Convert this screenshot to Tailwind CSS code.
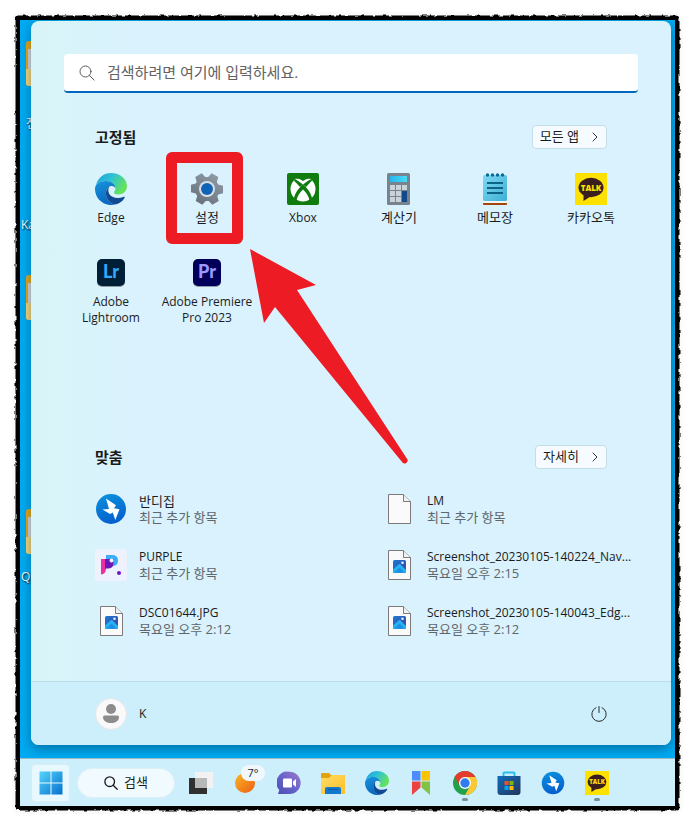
<!DOCTYPE html>
<html lang="ko">
<head>
<meta charset="utf-8">
<meta name="viewport" content="width=device-width, initial-scale=1">
<title>시작</title>
<script src="https://cdn.jsdelivr.net/npm/@tailwindcss/browser@4"></script>
</head>
<body class="bg-white font-['Open_Sans','Noto_Sans_CJK_KR',sans-serif] text-[#1b1b1b]">
<!-- Shared icon definitions -->
<svg class="absolute size-0" aria-hidden="true">
  <defs>
    <filter id="rough" x="-2%" y="-2%" width="104%" height="104%">
      <feTurbulence type="fractalNoise" baseFrequency="0.18" numOctaves="2" seed="4" result="n"/>
      <feDisplacementMap in="SourceGraphic" in2="n" scale="4" xChannelSelector="R" yChannelSelector="G"/>
    </filter>
    <linearGradient id="edgeTop" x1="0" y1="0" x2="1" y2="0.5"><stop offset="0" stop-color="#1b9de0"/><stop offset="0.5" stop-color="#2fc3d2"/><stop offset="1" stop-color="#66e35a"/></linearGradient>
    <linearGradient id="edgeLeft" x1="0" y1="0" x2="0.4" y2="1"><stop offset="0" stop-color="#1794dc"/><stop offset="1" stop-color="#0968c0"/></linearGradient>
    <linearGradient id="gear" x1="0" y1="0" x2="0" y2="1"><stop offset="0" stop-color="#8d98a3"/><stop offset="1" stop-color="#69747f"/></linearGradient>
    <linearGradient id="bandi" x1="0" y1="0" x2="0.3" y2="1"><stop offset="0" stop-color="#0a94dd"/><stop offset="1" stop-color="#0561cf"/></linearGradient>
    <linearGradient id="calc" x1="0" y1="0" x2="1" y2="0"><stop offset="0" stop-color="#27b5ee"/><stop offset="1" stop-color="#46dcf8"/></linearGradient>
    <linearGradient id="note" x1="0" y1="0" x2="1" y2="1"><stop offset="0" stop-color="#7fd9f3"/><stop offset="1" stop-color="#3fafd4"/></linearGradient>
    <linearGradient id="win" x1="0" y1="0" x2="1" y2="1"><stop offset="0" stop-color="#55d5fb"/><stop offset="1" stop-color="#0670cd"/></linearGradient>
    <linearGradient id="pic" x1="0" y1="0" x2="1" y2="1"><stop offset="0" stop-color="#1e7bd3"/><stop offset="0.6" stop-color="#2e55b4"/><stop offset="1" stop-color="#5b3fae"/></linearGradient>
    <linearGradient id="sun" x1="0" y1="0" x2="1" y2="1"><stop offset="0" stop-color="#f9b627"/><stop offset="1" stop-color="#ee5f12"/></linearGradient>
    <linearGradient id="chat" x1="1" y1="0" x2="0" y2="1"><stop offset="0" stop-color="#a07bc4"/><stop offset="0.5" stop-color="#6763cb"/><stop offset="1" stop-color="#4c4cae"/></linearGradient>
    <linearGradient id="fold" x1="0" y1="0" x2="1" y2="1"><stop offset="0" stop-color="#ffdc67"/><stop offset="1" stop-color="#fdbf25"/></linearGradient>
    <linearGradient id="store" x1="0" y1="0" x2="1" y2="1"><stop offset="0" stop-color="#0f6cbd"/><stop offset="1" stop-color="#273459"/></linearGradient>
    <symbol id="i-edge" viewBox="0 0 32 32">
      <path d="M1 12C3 4.500 9 0 16 0c9 0 16 6 16 13 0 5-4 8.500-8.500 8.500-3 0-4.500-1-4.500-2 0-1.200 1.500-1.800 1.500-4C20.500 11 16 8 11 8 6 8 3 9.500 1 12z" fill="url(#edgeTop)"/>
      <path d="M0 16C0 11.500 4 8 11 8c5.500 0 9.500 3.300 9.500 7.500-.8-2-2.500-2.700-4.500-2.500-3 .4-5.500 4-5 8 .6 5.500 5 10 9 11C9 33.500 0 26 0 16z" fill="url(#edgeLeft)"/>
      <path d="M14.500 13.300c-2.500 1.700-4 4.700-3.500 8.200.8 5 4.500 9.500 9 10 4-.8 7.500-3 9.500-6.500.5-1-.3-1.500-1.200-1-6 2.500-12.300.5-14.300-3.500-1.200-2.500-.7-5.500 .5-7.200z" fill="#114a92"/>
    </symbol>
    <symbol id="i-bandi" viewBox="0 0 32 32">
      <circle cx="16" cy="16" r="15" fill="url(#bandi)"/>
      <path d="M11 5.500 21 12.300 19 15.300 24.500 16.300 20.300 27 17.800 19.500 15 21 7.500 16.500 14 16z" fill="#fff"/>
    </symbol>
    <symbol id="i-talk" viewBox="0 0 32 32">
      <path d="M0 0h32v32H0z" fill="#fde100"/>
      <ellipse cx="16" cy="14.500" rx="12.500" ry="9.700" fill="#3b1e1e"/>
      <path d="M8.500 20.500 8.500 28l7-4.500z" fill="#3b1e1e"/>
      <text x="16" y="17.500" text-anchor="middle" font-family="Open Sans, sans-serif" font-weight="800" font-size="8" fill="#fde100">TALK</text>
    </symbol>
    <symbol id="i-file" viewBox="0 0 32 32">
      <path d="M5.500 1.500h15l7 7v22h-22z" fill="#fafafa" stroke="#7a7a7a"/>
      <path d="M20.500 1.500v7h7" fill="#f1f1f1" stroke="#7a7a7a"/>
    </symbol>
    <symbol id="i-image" viewBox="0 0 32 32">
      <use href="#i-file"/>
      <rect x="10" y="11" width="13" height="13" rx="1.500" fill="url(#pic)"/>
      <path d="M10 20.500 15.500 15.500q1-.8 2 0l5.500 5.500v1.500q0 1.500-1.500 1.500h-10q-1.500 0-1.500-1.500z" fill="#27b3f2"/>
      <path d="M11 23.800 16.500 18.500 22 23.800z" fill="#1e8fe6"/>
      <circle cx="19.500" cy="13.800" r="1.300" fill="#e5efff"/>
    </symbol>
    <symbol id="i-search" viewBox="0 0 16 16"><g fill="none" stroke="currentColor" stroke-linecap="round"><circle cx="6.500" cy="6.500" r="5.500"/><path d="m10.500 10.500 4.600 4.600"/></g></symbol>
    <symbol id="i-chev" viewBox="0 0 8 10"><path d="m2 1 4 4-4 4" fill="none" stroke="#333" stroke-linecap="round"/></symbol>
    <symbol id="i-folder" viewBox="0 0 40 46"><rect width="40" height="45" rx="3" fill="#eaa915"/><path d="M2 8h36v24H2z" fill="#d9dadb"/><path d="M0 28h40v14q0 3-3 3H3q-3 0-3-3z" fill="#f7d878"/></symbol>
  </defs>
</svg>

<div class="relative flex min-h-screen flex-col p-5">
  <!-- Torn black frame around the desktop -->
  <div class="absolute inset-3 rounded-lg bg-neutral-50"></div>
  <div class="absolute inset-4">
    <svg class="size-full overflow-visible" aria-hidden="true"><rect width="100%" height="100%" rx="3" stroke="#000" stroke-width="1" filter="url(#rough)"/></svg>
  </div>

  <div class="relative flex grow flex-col overflow-hidden bg-[#00abf2]">
    <!-- Desktop shortcuts partly covered by the menu -->
    <div class="absolute inset-y-0 left-0 w-16 text-xs text-white text-shadow-[1px_1px_2px_#000]">
      <svg class="absolute top-[21px] left-[6px] h-[46px] w-10" aria-hidden="true"><use href="#i-folder"/></svg>
      <span class="absolute top-24 left-[6px]">전</span>
      <span class="absolute top-[197px] left-px">Ka</span>
      <svg class="absolute top-[255px] left-[6px] h-[46px] w-10" aria-hidden="true"><use href="#i-folder"/></svg>
      <svg class="absolute top-[489px] left-[6px] h-[46px] w-10" aria-hidden="true"><use href="#i-folder"/></svg>
      <span class="absolute top-[549px] left-px">Qu</span>
    </div>

    <main class="relative mt-px mr-1 mb-[13px] ml-[11px] flex grow flex-col rounded-lg bg-[#d9f2fd] bg-linear-to-r from-[#d9f4f8] to-[#d9f2fd] to-15% shadow-[0_4px_12px_rgba(0,40,70,0.45)]">
      <div class="flex grow flex-col px-8 pt-[33px]">
        <label class="mx-px flex h-[39px] items-center gap-3 overflow-hidden rounded border-b-2 border-[#0067c0] bg-white px-[15px] text-[#5c5c5c]">
          <svg class="size-4 shrink-0" aria-hidden="true"><use href="#i-search"/></svg>
          <input type="text" aria-label="검색" placeholder="검색하려면 여기에 입력하세요." class="min-w-0 grow bg-transparent text-[15px] outline-none placeholder:text-[#626262]">
        </label>

        <section>
          <div class="mt-8 flex h-6 items-center justify-between px-8">
            <h2 class="text-[15px] leading-5 font-bold">고정됨</h2>
            <button class="flex h-6 items-center gap-3 rounded border border-[#c5dde8] bg-[#f5fbff] px-[7px] text-[13px]">모든 앱<svg class="h-[10px] w-2" aria-hidden="true"><use href="#i-chev"/></svg></button>
          </div>
          <div class="mt-6 grid grid-cols-6 text-center text-xs leading-4">
            <a href="#" class="flex h-21 flex-col items-center gap-[5px]"><svg class="size-8 shrink-0" aria-hidden="true"><use href="#i-edge"/></svg>Edge</a>
            <a href="#" class="relative flex h-21 flex-col items-center gap-1 text-[13px]">
              <svg class="size-8 shrink-0" viewBox="0 0 32 32" aria-hidden="true">
                <path transform="rotate(30 16 16)" d="M12.200 0h7.600l1.200 5 2.500 1.500 5-1.500 3.600 6.500-3.600 3.500v2l3.600 3.500-3.600 6.500-5-1.500L21 27l-1.200 5h-7.600L11 27l-2.500-1.500-5 1.500L-.1 20.500 3.500 17v-2L-.1 11.500 3.500 5l5 1.500L11 5z" fill="url(#gear)"/>
                <circle cx="16" cy="16" r="8" fill="#d9e0e6"/><circle cx="16" cy="16" r="6" fill="#1163b5"/>
              </svg>설정
              <span class="absolute -top-[21px] left-[7px] h-23 w-[77px] rounded-md border-[11px] border-[#ed1c24]"></span>
            </a>
            <a href="#" class="flex h-21 flex-col items-center gap-[5px]">
              <svg class="size-8 shrink-0" viewBox="0 0 32 32" aria-hidden="true"><rect width="32" height="32" rx="2" fill="#107c10"/><circle cx="16" cy="16" r="12.500" fill="#fff"/><path d="M8.300 6.200C11 4.800 14 6.500 16 8c2-1.500 5-3.200 7.700-1.800l-1-1.500C20 3 18 2.800 16 2.800s-4 .2-6.700 1.900zM16 11.500c4 3 8.500 9 9 14l-2.500 1.700C21.500 23 19 19 16 16.500 13 19 10.500 23 9.500 27.200L7 25.500c.5-5 5-11 9-14z" fill="#107c10"/><path d="M8.300 6.200Q12 8 16 11.500l-3 2.500Q9 9.500 6.800 7.500zM23.700 6.200Q20 8 16 11.500l3 2.500q4-4.500 6.200-6.500z" fill="#107c10"/></svg>Xbox</a>
            <a href="#" class="flex h-21 flex-col items-center gap-1 text-[13px]">
              <svg class="size-8 shrink-0" viewBox="0 0 32 32" aria-hidden="true"><rect x="4" width="23" height="32" rx="1.500" fill="#78838e"/><path d="M7 3h17v6H7z" fill="url(#calc)"/><path d="M7 12h5v5H7zm6 0h5v5h-5zm6 0h5v5h-5zM7 18h5v5H7zm6 0h5v5h-5zM7 24h5v5H7zm6 0h5v5h-5z" fill="#cbd3da"/><path d="M19 18h5v11h-5z" fill="#124a8c"/></svg>계산기</a>
            <a href="#" class="flex h-21 flex-col items-center gap-1 text-[13px]">
              <svg class="size-8 shrink-0" viewBox="0 0 32 32" aria-hidden="true"><path d="M4 28h24v3q0 1-1 1H5q-1 0-1-1z" fill="#a54509"/><path d="M4 26h24v4H4z" fill="#f2f5f6"/><rect x="4" y="2" width="24" height="26" rx="1.500" fill="url(#note)"/><path d="M8 10h16M8 15h16M8 20h16" stroke="#0c6489" stroke-width="2"/><g fill="#0b6a90"><circle cx="8.500" cy="2" r="1.700"/><circle cx="13.500" cy="2" r="1.700"/><circle cx="18.500" cy="2" r="1.700"/><circle cx="23.500" cy="2" r="1.700"/></g></svg>메모장</a>
            <a href="#" class="flex h-21 flex-col items-center gap-1 text-[13px]"><svg class="size-8 shrink-0" aria-hidden="true"><use href="#i-talk"/></svg>카카오톡</a>
            <a href="#" class="flex h-21 flex-col items-center gap-[5px]">
              <svg class="size-8 shrink-0" viewBox="0 0 32 32" aria-hidden="true"><rect x="2" y="3" width="28" height="27" rx="5" fill="#000" opacity="0.35"/><rect x="2" y="2" width="28" height="27" rx="5" fill="#001e36"/><text x="16" y="20.500" text-anchor="middle" font-family="Lato, sans-serif" font-weight="900" font-size="18" fill="#31a8ff">Lr</text></svg>Adobe<br>Lightroom</a>
            <a href="#" class="flex h-21 flex-col items-center gap-[5px]">
              <svg class="size-8 shrink-0" viewBox="0 0 32 32" aria-hidden="true"><rect x="2" y="3" width="28" height="27" rx="5" fill="#000" opacity="0.35"/><rect x="2" y="2" width="28" height="27" rx="5" fill="#00005b"/><text x="16" y="20.500" text-anchor="middle" font-family="Lato, sans-serif" font-weight="900" font-size="18" fill="#9999ff">Pr</text></svg><span class="whitespace-nowrap">Adobe Premiere<br>Pro 2023</span></a>
          </div>
        </section>

        <section class="mt-[104px] mb-8">
          <div class="flex h-6 items-center justify-between px-8">
            <h2 class="text-[15px] leading-5 font-bold">맞춤</h2>
            <button class="flex h-6 items-center gap-3 rounded border border-[#c5dde8] bg-[#f5fbff] px-[7px] text-[13px]">자세히<svg class="h-[10px] w-2" aria-hidden="true"><use href="#i-chev"/></svg></button>
          </div>
          <div class="mt-3 grid grid-cols-2 text-xs leading-4 whitespace-nowrap">
            <a href="#" class="flex h-14 items-center gap-3 pl-8"><svg class="size-8 shrink-0" aria-hidden="true"><use href="#i-bandi"/></svg><span><span class="block text-[13px]">반디집</span><span class="block text-[13px] text-[#5d666b]">최근 추가 항목</span></span></a>
            <a href="#" class="flex h-14 items-center gap-3 pl-8"><svg class="size-8 shrink-0" aria-hidden="true"><use href="#i-file"/></svg><span><span class="block">LM</span><span class="block text-[13px] text-[#5d666b]">최근 추가 항목</span></span></a>
            <a href="#" class="flex h-14 items-center gap-3 pl-8">
              <svg class="size-8 shrink-0" viewBox="0 0 32 32" aria-hidden="true"><rect width="32" height="32" rx="3" fill="#edf2fe"/><path d="M11 6h6q6 0 6 5.500T17 17h-6z" fill="#3cabf8"/><path d="M6 10h5v9.500q0 5.500-5 6z" fill="#ec2fa5"/><path d="M10 10h8.500v4q0 5-5 5.500H10z" fill="#6d17b8"/><circle cx="16.500" cy="11.500" r="2" fill="#edf2fe"/><circle cx="24" cy="24" r="2" fill="#6d17c8"/></svg>
              <span><span class="block">PURPLE</span><span class="block text-[13px] text-[#5d666b]">최근 추가 항목</span></span></a>
            <a href="#" class="flex h-14 items-center gap-3 pl-8"><svg class="size-8 shrink-0" aria-hidden="true"><use href="#i-image"/></svg><span><span class="block">Screenshot_20230105-140224_Nav...</span><span class="block text-[13px] text-[#5d666b]">목요일 오후 2:15</span></span></a>
            <a href="#" class="flex h-14 items-center gap-3 pl-8"><svg class="size-8 shrink-0" aria-hidden="true"><use href="#i-image"/></svg><span><span class="block">DSC01644.JPG</span><span class="block text-[13px] text-[#5d666b]">목요일 오후 2:12</span></span></a>
            <a href="#" class="flex h-14 items-center gap-3 pl-8"><svg class="size-8 shrink-0" aria-hidden="true"><use href="#i-image"/></svg><span><span class="block">Screenshot_20230105-140043_Edg...</span><span class="block text-[13px] text-[#5d666b]">목요일 오후 2:12</span></span></a>
          </div>
        </section>
      </div>

      <footer class="flex h-16 items-center justify-between rounded-b-lg border-t border-[#b9dce9] bg-[#cdeffc] px-16">
        <button class="flex items-center gap-3 text-xs">
          <svg class="size-8" viewBox="0 0 32 32" aria-hidden="true"><circle cx="16" cy="16" r="15.500" fill="#f9f9f9" stroke="#e6e6e6"/><circle cx="16" cy="11" r="5" fill="#8c8c8c"/><path d="M8 19q0-1.500 1.500-1.500h13q1.500 0 1.500 1.500c0 4-4 6-8 6s-8-2-8-6z" fill="#8c8c8c"/></svg>K
        </button>
        <button aria-label="전원"><svg class="size-4" viewBox="0 0 16 16" fill="none" stroke="#2b2b2b" stroke-linecap="round" aria-hidden="true"><path d="M5 1.600a7.200 7.200 0 1 0 6 0M8 .5v6"/></svg></button>
      </footer>

      <!-- Pointer arrow -->
      <svg class="pointer-events-none absolute top-[228px] left-[219px] h-[215px] w-[159px]" viewBox="0 0 159 215" aria-hidden="true"><path d="M0 0 66 36 47 41 157.500 210.500A3 3 0 0 1 152.500 213.500L25 58 14 74z" fill="#ed1c24"/></svg>
    </main>

    <nav class="relative flex h-12 items-center border-t border-[#9cb9c8] bg-[#cdeffc] pl-[11px]">
      <button aria-label="시작" class="flex h-[38px] w-[39px] items-center justify-center rounded border border-[#d9ecf5] bg-[#e7f8fe]"><svg class="size-6" viewBox="0 0 24 24" aria-hidden="true"><path d="M.5.500h11v11H.5zM12.500.500h11v11h-11zM.5 12.500h11v11H.5zM12.500 12.500h11v11h-11z" fill="url(#win)"/></svg></button>
      <button class="mr-1 ml-[7px] flex h-[30px] w-[98px] items-center justify-center gap-1.5 rounded-full border border-[#e0f0f7] bg-[#f1faff] text-[13px]"><svg class="size-[14px] stroke-[1.5]" aria-hidden="true"><use href="#i-search"/></svg>검색</button>
      <button aria-label="작업 보기" class="flex h-12 w-11 items-center justify-center"><svg class="size-6" viewBox="0 0 24 24" aria-hidden="true"><path d="M0 7h18v16H0z" fill="#2f302f"/><path d="M6 1h18v16H6z" fill="#f2f2f2"/><path d="M6 7h12v10H6z" fill="#b7b8b8"/></svg></button>
      <button aria-label="날씨" class="relative flex h-12 w-11 items-center justify-center"><svg class="size-6" viewBox="0 0 24 24" aria-hidden="true"><circle cx="12" cy="12" r="10" fill="url(#sun)"/></svg><span class="absolute top-1.5 right-0.5 h-4 w-6 rounded-full bg-[#f0f8fb] text-center text-[11px] leading-4">7°</span></button>
      <button aria-label="채팅" class="flex h-12 w-11 items-center justify-center"><svg class="size-6" viewBox="0 0 24 24" aria-hidden="true"><path d="M12.500.800A11 11 0 0 1 12.500 23H1l1.300-4A11 11 0 0 1 12.500.800z" fill="url(#chat)"/><rect x="6" y="7.500" width="9" height="9" rx="1" fill="#fff"/><path d="m16 10.500 3-2.500v8l-3-2.500z" fill="#fff"/></svg></button>
      <button aria-label="파일 탐색기" class="flex h-12 w-11 items-center justify-center"><svg class="size-6" viewBox="0 0 24 24" aria-hidden="true"><path d="M0 3q0-1 1-1h7l2 2h13q1 0 1 1v4H0z" fill="#e2a30d"/><path d="M0 7h8l3-3h12q1 0 1 1v17q0 1-1 1H1q-1 0-1-1z" fill="url(#fold)"/><path d="M4 23v-5q0-2 2-2h12q2 0 2 2v5z" fill="#1379cd"/><path d="M7 18.500h10" stroke="#0b58a4"/></svg></button>
      <button aria-label="Edge" class="flex h-12 w-11 items-center justify-center"><svg class="size-6" aria-hidden="true"><use href="#i-edge"/></svg></button>
      <button aria-label="북마크" class="flex h-12 w-11 items-center justify-center"><svg class="size-6" viewBox="0 0 24 24" aria-hidden="true"><path d="M3 0h8.500v9.500H3z" fill="#4c8dfb"/><path d="M12.500 0H21v9.500h-8.500z" fill="#fcc300"/><path d="M3 10.500h8.500v6L3 24z" fill="#ea4340"/><path d="M12.500 10.500H21V24l-8.500-7.500z" fill="#82c341"/></svg></button>
      <button aria-label="Chrome" class="relative flex h-12 w-11 items-center justify-center"><svg class="size-6" viewBox="0 0 24 24" aria-hidden="true"><circle cx="12" cy="12" r="12" fill="#22a04b"/><path d="M1.600 6A12 12 0 0 1 22.400 6H12L7 15z" fill="#e33b2e"/><path d="M22.400 6A12 12 0 0 1 12 24l5.200-9L12 6z" fill="#fcc934"/><circle cx="12" cy="12" r="6" fill="#fff"/><circle cx="12" cy="12" r="4.700" fill="#2f7cf0"/></svg><span class="absolute bottom-1.5 h-[3px] w-1.5 rounded-full bg-[#7b8e96]"></span></button>
      <button aria-label="Microsoft Store" class="flex h-12 w-11 items-center justify-center"><svg class="size-6" viewBox="0 0 24 24" aria-hidden="true"><path d="M6.500 6V2.500q0-1 1-1h9q1 0 1 1V6" fill="none" stroke="#2abcf0" stroke-width="2"/><path d="M.5 5h23v16q0 3-3 3h-17q-3 0-3-3z" fill="url(#store)"/><path d="M7.500 10h4v4h-4z" fill="#f25022"/><path d="M12.500 10h4v4h-4z" fill="#7fba00"/><path d="M7.500 15h4v4h-4z" fill="#00a4ef"/><path d="M12.500 15h4v4h-4z" fill="#ffb900"/></svg></button>
      <button aria-label="반디집" class="flex h-12 w-11 items-center justify-center"><svg class="size-6" aria-hidden="true"><use href="#i-bandi"/></svg></button>
      <button aria-label="카카오톡" class="relative flex h-12 w-11 items-center justify-center"><svg class="size-6" aria-hidden="true"><use href="#i-talk"/></svg><span class="absolute bottom-1.5 h-[3px] w-1.5 rounded-full bg-[#7b8e96]"></span></button>
    </nav>
  </div>
</div>
</body>
</html>
